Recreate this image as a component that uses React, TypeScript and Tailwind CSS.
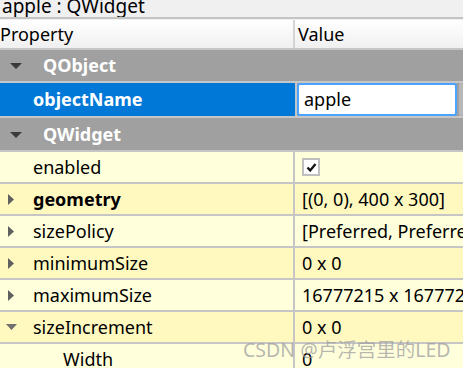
import React from 'react';

type Row = {
  name: string;
  value?: React.ReactNode;
  bold?: boolean;
  arrow?: 'right' | 'down';
  indent?: boolean;
  dark?: boolean;
};

const rows: Row[] = [
  { name: 'enabled', value: 'check' },
  { name: 'geometry', value: '[(0, 0), 400 x 300]', bold: true, arrow: 'right', dark: true },
  { name: 'sizePolicy', value: '[Preferred, Preferred, 0, 0]', arrow: 'right' },
  { name: 'minimumSize', value: '0 x 0', arrow: 'right', dark: true },
  { name: 'maximumSize', value: '16777215 x 16777215', arrow: 'right' },
  { name: 'sizeIncrement', value: '0 x 0', arrow: 'down', dark: true },
  { name: 'Width', value: '0', indent: true },
];

function GroupRow({ title, tall }: { title: string; tall?: boolean }) {
  return (
    <div className={`${tall ? 'h-[34px]' : 'h-[33px]'} shrink-0 bg-[#a0a0a0] border-b-2 border-[#c6c6c6] flex items-center`}>
      <svg width="12" height="6" viewBox="0 0 12 6" className="ml-[10px] mt-[1px]">
        <polygon points="0,0 12,0 6,6" fill="#3a3a3a" />
      </svg>
      <span className="ml-[21px] font-bold text-white">{title}</span>
    </div>
  );
}

function Checkbox() {
  return (
    <div className="w-[18px] h-[18px] border-2 border-[#c0c0c0] bg-white flex items-center justify-center">
      <svg width="11" height="9" viewBox="0 0 11 9">
        <path d="M1.5 4.5 L4.2 7.5 L9.5 1" stroke="#111" strokeWidth="2.2" fill="none" />
      </svg>
    </div>
  );
}

function PropRow({ row }: { row: Row }) {
  return (
    <div
      className={`h-[32px] shrink-0 flex border-b-2 border-[#c6c6c6] ${row.dark ? 'bg-[#fff9c0]' : 'bg-[#ffffdc]'}`}
    >
      <div className="w-[295px] shrink-0 flex items-center border-r-2 border-[#c6c6c6]">
        <div className="w-[33px] shrink-0 flex items-center">
          {row.arrow === 'right' && (
            <svg width="6" height="11" viewBox="0 0 6 11" className="ml-[8px]">
              <polygon points="0,0 6,5.5 0,11" fill="#606060" />
            </svg>
          )}
          {row.arrow === 'down' && (
            <svg width="11" height="6" viewBox="0 0 11 6" className="ml-[6px]">
              <polygon points="0,0 11,0 5.5,6" fill="#707070" />
            </svg>
          )}
        </div>
        <span className={`${row.indent ? 'ml-[30px]' : ''} ${row.bold ? 'font-bold' : ''} whitespace-nowrap`}>
          {row.name}
        </span>
      </div>
      <div className="flex-1 min-w-0 flex items-center pl-[7px] whitespace-nowrap overflow-hidden">
        {row.value === 'check' ? <Checkbox /> : row.value}
      </div>
    </div>
  );
}

export default function App() {
  return (
    <div
      className="relative w-[463px] h-[368px] overflow-hidden bg-[#f0f0f0] text-[18px] text-black flex flex-col"
      style={{ fontFamily: '"Noto Sans", "Noto Sans CJK SC", sans-serif' }}
    >
      {/* title */}
      <div className="h-[19px] shrink-0 border-b-2 border-[#c4c4c4] overflow-hidden leading-none">
        <div className="-mt-[3px] pl-[2px] text-[19px]">apple : QWidget</div>
      </div>
      {/* header */}
      <div className="h-[30px] shrink-0 flex bg-gradient-to-b from-white to-[#f0f0f0] border-b-2 border-[#c6c6c6] mt-[1px]">
        <div className="w-[295px] shrink-0 flex items-center border-r-2 border-[#d4d4d4]">Property</div>
        <div className="flex-1 flex items-center pl-[3px]">Value</div>
      </div>

      <GroupRow title="QObject" />
      <div className="h-[35px] shrink-0 flex border-b-2 border-[#c6c6c6] bg-[#a0a0a0]">
        <div className="w-[295px] shrink-0 bg-[#0078d7] flex items-center pl-[33px] font-bold text-white">
          objectName
        </div>
        <div className="w-[2px] bg-[#c6c6c6]" />
        <div className="w-[160px] shrink-0 bg-white border-2 border-[#4aa3ff] rounded-[3px] flex items-center pl-[5px]">
          apple
        </div>
        <div className="ml-[2px] flex-1 bg-[#e8e8e8] border-2 border-[#b8b8b8] rounded-[3px]" />
      </div>
      <GroupRow title="QWidget" tall />

      {rows.map((r) => (
        <PropRow key={r.name} row={r} />
      ))}

      <div className="absolute left-[243px] top-[335px] text-[19.5px] text-[#a0a0a0]/75 whitespace-nowrap">
        CSDN @卢浮宫里的LED
      </div>
    </div>
  );
}
